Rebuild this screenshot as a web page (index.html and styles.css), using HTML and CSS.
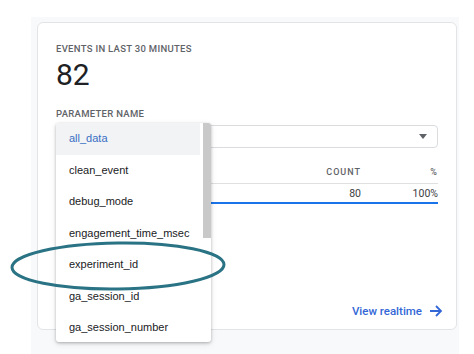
FILE: index.html
```html
<!DOCTYPE html>
<html lang="en">
<head>
    <meta charset="UTF-8">
    <meta name="viewport" content="width=device-width, initial-scale=1.0">
    <title>Realtime card</title>
    <link rel="stylesheet" href="styles.css">
</head>
<body>

<div class="frame">
    <div class="card">
        <div class="label">Events in last 30 minutes</div>
        <div class="total">82</div>

        <div class="label param-label">Parameter name</div>
        <div class="select">
            <span class="select-value"></span>
            <span class="caret"></span>
        </div>

        <!-- Table of values -->
        <div class="table">
            <div class="row head">
                <span class="col-name"></span>
                <span class="col-count">Count</span>
                <span class="col-pct">%</span>
            </div>
            <div class="row data">
                <span class="col-name"></span>
                <span class="col-count">80</span>
                <span class="col-pct">100%</span>
            </div>
        </div>

        <a class="view-link" href="#">View realtime
            <svg width="14" height="12" viewBox="0 0 14 12"><path d="M1 6h11M7 1l5 5-5 5" fill="none" stroke="currentColor" stroke-width="1.8"/></svg>
        </a>

        <!-- Open dropdown menu -->
        <div class="menu">
            <ul class="menu-list">
                <li class="active">all_data</li>
                <li>clean_event</li>
                <li>debug_mode</li>
                <li>engagement_time_msec</li>
                <li>experiment_id</li>
                <li>ga_session_id</li>
                <li>ga_session_number</li>
            </ul>
            <div class="scroll-track"><div class="scroll-thumb"></div></div>
        </div>
    </div>
</div>

<!-- Annotation circle -->
<svg class="mark" width="224" height="54" viewBox="0 0 224 54">
    <ellipse cx="112" cy="27" rx="106" ry="23" transform="rotate(-0.8 112 27)" fill="none" stroke="#2a7385" stroke-width="3"/>
</svg>

</body>
</html>
```

FILE: styles.css
```css
body {
    margin: 0;
    font-family: Roboto, "Noto Sans", Arial, sans-serif;
    background-color: #ffffff;
    height: 354px;
    overflow: hidden;
    position: relative;
}
.frame {
    margin: 17px 15px 0 31px;
    padding: 5px 2px 0 6px;
    background-color: #f8f9fa;
    height: 332px;
}
.card {
    position: relative;
    display: flex;
    flex-direction: column;
    padding: 20px 18px 0 18px;
    background-color: white;
    border: 1px solid #e3e4e6;
    border-radius: 6px;
    box-sizing: border-box;
    height: 308px;
}
.label {
    font-size: 9.5px;
    line-height: 12px;
    font-weight: 500;
    letter-spacing: 0.3px;
    text-transform: uppercase;
    color: #5f6368;
}
.total {
    font-size: 30px;
    line-height: 36px;
    color: #202124;
    margin-top: 2px;
}
.param-label {
    margin-top: 15px;
}
.select {
    display: flex;
    align-items: center;
    justify-content: space-between;
    height: 23px;
    margin-top: 5px;
    padding: 0 10px;
    border: 1px solid #dadce0;
    border-radius: 4px;
    box-sizing: border-box;
}
.caret {
    width: 0;
    height: 0;
    border-left: 4px solid transparent;
    border-right: 4px solid transparent;
    border-top: 5px solid #5f6368;
}
.table {
    margin-top: 14px;
}
.row {
    display: flex;
    align-items: center;
    font-size: 10.5px;
    color: #3c4043;
}
.row.head {
    height: 19px;
    border-bottom: 1px solid #e0e0e0;
    font-size: 9px;
    font-weight: 500;
    letter-spacing: 1px;
    text-transform: uppercase;
    color: #5f6368;
    padding-bottom: 2px;
}
.row.data {
    height: 18px;
    border-bottom: 2px solid #1a73e8;
}
.col-name {
    flex: 1;
}
.col-count {
    width: 60px;
    text-align: right;
}
.col-pct {
    width: 77px;
    text-align: right;
}
.view-link {
    margin-top: auto;
    margin-bottom: 11px;
    align-self: flex-end;
    display: flex;
    align-items: center;
    gap: 7px;
    margin-right: -5px;
    font-size: 11.5px;
    font-weight: 500;
    color: #3367d6;
    text-decoration: none;
}
.menu {
    position: absolute;
    left: 18px;
    top: 100px;
    width: 155px;
    height: 219px;
    display: flex;
    background-color: white;
    border-radius: 3px;
    box-shadow: 0 1px 3px rgba(0, 0, 0, 0.25), 0 2px 6px rgba(0, 0, 0, 0.1);
    overflow: hidden;
}
.menu-list {
    list-style-type: none;
    margin: 0;
    padding: 0;
    flex: 1;
}
.menu-list li {
    height: 31.5px;
    line-height: 31.5px;
    padding-left: 13px;
    font-family: "Liberation Sans", Arial, sans-serif;
    font-size: 11px;
    color: #202124;
    margin-right: 3px;
}
.menu-list li.active {
    background-color: #f1f3f4;
    color: #3a6fc4;
}
.scroll-track {
    width: 8px;
}
.scroll-thumb {
    height: 115px;
    background-color: #c9c9c9;
}
.mark {
    position: absolute;
    left: 6px;
    top: 239px;
}
```
